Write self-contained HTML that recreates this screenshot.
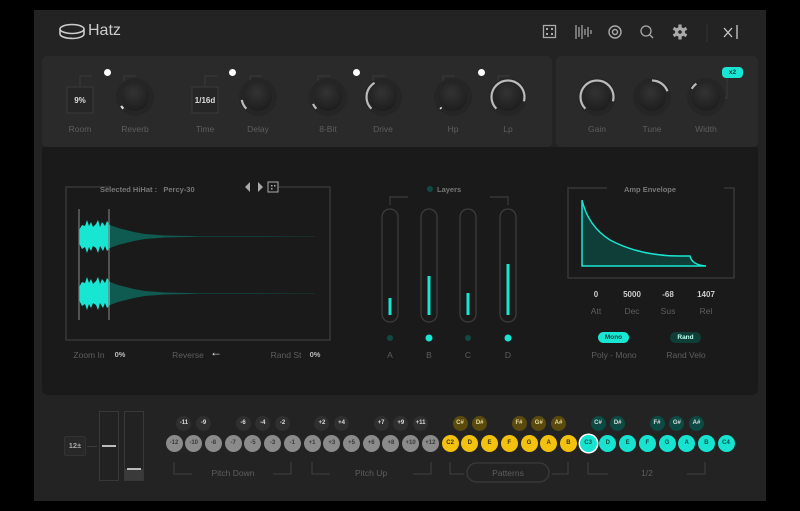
<!DOCTYPE html>
<html><head><meta charset="utf-8"><style>
*{margin:0;padding:0;box-sizing:border-box}
body{width:800px;height:511px;background:#000;position:relative;overflow:hidden;font-family:"Liberation Sans",sans-serif;font-weight:bold}
.a{position:absolute}
.lbl{position:absolute;font-size:8.5px;color:#5e5e5e;text-align:center;width:60px;margin-left:-30px;font-weight:normal}
.val{position:absolute;font-size:8px;color:#ccc;text-align:center;width:50px;margin-left:-25px}
.k{position:absolute;width:17px;height:17px;border-radius:50%;font-size:6px;line-height:17px;text-align:center;top:434.5px}
.u{position:absolute;width:15px;height:15px;border-radius:50%;font-size:6px;line-height:15px;text-align:center;top:415.5px}
.g{background:#8b8b8b;color:#3a3a3a}.gu{background:#2f2f2f;color:#ddd}
.y{background:#f3c20f;color:#3a3000}.yu{background:#5a4a0e;color:#e8dca0}
.c{background:#16e3d0;color:#0d4c46}.cu{background:#0d4a44;color:#ddd}
.dot{position:absolute;width:7px;height:7px;border-radius:50%;background:#fff}
</style></head><body>
<div class="a" style="left:34px;top:10px;width:732px;height:491px;background:#232323"></div>
<!-- header -->
<svg class="a" style="left:58px;top:23px" width="30" height="18"><ellipse cx="14" cy="6" rx="12" ry="4.5" fill="none" stroke="#ccc" stroke-width="1.6"/><path d="M2 6v5c0 2.5 5.4 4.5 12 4.5s12-2 12-4.5V6" fill="none" stroke="#ccc" stroke-width="1.6"/><path d="M2 10.5c0 2.5 5.4 4.5 12 4.5" fill="none" stroke="#ccc" stroke-width="1"/></svg>
<div class="a" style="left:88px;top:22px;font-size:16px;color:#ccc;font-weight:normal">Hatz</div>
<svg class="a" style="left:542px;top:24px" width="200" height="18">
<rect x="1.5" y="1.5" width="12" height="12" fill="none" stroke="#aaa" stroke-width="1.3"/><rect x="4" y="4" width="2" height="2" fill="#aaa"/><rect x="9" y="4" width="2" height="2" fill="#aaa"/><rect x="4" y="9" width="2" height="2" fill="#aaa"/><rect x="9" y="9" width="2" height="2" fill="#aaa"/>
<g stroke="#aaa" stroke-width="1.2"><path d="M34 1v14M37 3v10M40 1v14M43 5v6M46 3v10M49 6v4"/></g>
<circle cx="73" cy="8" r="6" fill="none" stroke="#aaa" stroke-width="1.4"/><circle cx="73" cy="8" r="2.5" fill="none" stroke="#aaa" stroke-width="1.4"/>
<circle cx="104" cy="7" r="5" fill="none" stroke="#aaa" stroke-width="1.3"/><path d="M108 11l3 3" stroke="#aaa" stroke-width="1.3"/>
<g transform="translate(138 8)" fill="#aaa"><circle r="5"/><rect x="-1.6" y="-7.5" width="3.2" height="15"/><rect x="-1.6" y="-7.5" width="3.2" height="15" transform="rotate(60)"/><rect x="-1.6" y="-7.5" width="3.2" height="15" transform="rotate(120)"/><circle r="1.8" fill="#232323"/></g>
<path d="M165 -2v24" stroke="#333" stroke-width="1"/>
<path d="M182 4l8 9M190 4l-8 9M195 1v14" stroke="#ccc" stroke-width="1.3"/>
</svg>
<!-- top panels -->
<div class="a" style="left:42px;top:56px;width:510px;height:91px;background:#2a2a2a;border-radius:5px"></div>
<div class="a" style="left:556px;top:56px;width:202px;height:91px;background:#2a2a2a;border-radius:5px"></div>
<div class="a" style="left:42px;top:147px;width:716px;height:248px;background:#1a1a1a;border-radius:0 0 6px 6px"></div>
<svg class="a" style="left:0;top:0" width="800" height="150">
<defs><radialGradient id="kg" cx="45%" cy="35%" r="70%"><stop offset="0" stop-color="#333"/><stop offset="1" stop-color="#1c1c1c"/></radialGradient></defs>
<g fill="none" stroke="#3a3a3a" stroke-width="1">
<path d="M80 87V76h12"/><path d="M205 87V76h12"/><path d="M124 82V76h12"/><path d="M250 82V76h12"/>
<path d="M318 82V76h12"/><path d="M373 82V76h12"/><path d="M443 82V76h12"/><path d="M498 82V76h12"/>
<path d="M722 98h5V78"/>
</g>
<rect x="67" y="87" width="26" height="26" fill="#262626" stroke="#3a3a3a"/>
<rect x="192" y="87" width="26" height="26" fill="#262626" stroke="#3a3a3a"/>
<g>
<g transform="translate(135 97)"><circle r="19" fill="#252525"/><circle r="14" fill="url(#kg)"/><circle r="16.5" fill="none" stroke="#ddd" stroke-width="2.2" stroke-dasharray="3.5 200" transform="rotate(-225)"/></g>
<g transform="translate(258 97)"><circle r="19" fill="#252525"/><circle r="14" fill="url(#kg)"/><circle r="16.5" fill="none" stroke="#bbb" stroke-width="2.2" stroke-dasharray="10 200" transform="rotate(-225)"/></g>
<g transform="translate(328 97)"><circle r="19" fill="#252525"/><circle r="14" fill="url(#kg)"/><circle r="16.5" fill="none" stroke="#bbb" stroke-width="2.2" stroke-dasharray="5.8 200" transform="rotate(-225)"/></g>
<g transform="translate(383 97)"><circle r="19" fill="#252525"/><circle r="14" fill="url(#kg)"/><circle r="16.5" fill="none" stroke="#bbb" stroke-width="2.2" stroke-dasharray="30 200" transform="rotate(-225)"/></g>
<g transform="translate(453 97)"><circle r="19" fill="#252525"/><circle r="14" fill="url(#kg)"/><circle r="16.5" fill="none" stroke="#eee" stroke-width="2.2" stroke-dasharray="1.5 200" transform="rotate(-225)"/></g>
<g transform="translate(508 97)"><circle r="19" fill="#252525"/><circle r="14" fill="url(#kg)"/><circle r="16.5" fill="none" stroke="#bbb" stroke-width="2.2" stroke-dasharray="69 200" transform="rotate(-225)"/></g>
<g transform="translate(597 97)"><circle r="19" fill="#252525"/><circle r="14" fill="url(#kg)"/><circle r="16.5" fill="none" stroke="#bbb" stroke-width="2.2" stroke-dasharray="69 200" transform="rotate(-225)"/></g>
<g transform="translate(652 97)"><circle r="19" fill="#252525"/><circle r="14" fill="url(#kg)"/><circle r="16.5" fill="none" stroke="#bbb" stroke-width="2.2" stroke-dasharray="20 200" transform="rotate(-90)"/></g>
<g transform="translate(706 97)"><circle r="19" fill="#252525"/><circle r="14" fill="url(#kg)"/><circle r="16.5" fill="none" stroke="#bbb" stroke-width="2.2" stroke-dasharray="7 200" transform="rotate(-150)"/></g>
</g>
</svg>
<div class="val" style="left:80px;top:96px;color:#ddd">9%</div>
<div class="val" style="left:205px;top:96px;color:#ddd">1/16d</div>
<div class="dot" style="left:104px;top:69px"></div><div class="dot" style="left:229px;top:69px"></div><div class="dot" style="left:353px;top:69px"></div><div class="dot" style="left:478px;top:69px"></div>
<div class="a" style="left:722px;top:67px;width:21px;height:11px;border-radius:4px;background:#19e6d2;color:#0d3a36;font-size:6.5px;text-align:center;line-height:11px">x2</div>
<div class="lbl" style="left:80px;top:124px">Room</div><div class="lbl" style="left:135px;top:124px">Reverb</div>
<div class="lbl" style="left:205px;top:124px">Time</div><div class="lbl" style="left:258px;top:124px">Delay</div>
<div class="lbl" style="left:328px;top:124px">8-Bit</div><div class="lbl" style="left:383px;top:124px">Drive</div>
<div class="lbl" style="left:453px;top:124px">Hp</div><div class="lbl" style="left:508px;top:124px">Lp</div>
<div class="lbl" style="left:597px;top:124px">Gain</div><div class="lbl" style="left:652px;top:124px">Tune</div><div class="lbl" style="left:706px;top:124px">Width</div>
<!-- middle -->
<svg class="a" style="left:0;top:150px" width="800" height="250">
<g transform="translate(0 -150)">
<path d="M110 187H66v153h264V187h-52" fill="none" stroke="#3c3c3c" stroke-width="1.3"/>
<path d="M250 182l-5 5 5 5z M258 182l5 5-5 5z" fill="#aaa"/>
<rect x="268" y="182" width="10" height="10" fill="none" stroke="#aaa" stroke-width="1"/><rect x="271" y="185" width="1.5" height="1.5" fill="#aaa"/><rect x="274" y="185" width="1.5" height="1.5" fill="#aaa"/><rect x="271" y="188" width="1.5" height="1.5" fill="#aaa"/>
<g id="w"><path d="M110 225L118 228L126 230L134 232L145 234L165 235.5L200 236.2L315 236.4L315 236.6L200 236.8L165 237.5L145 239L134 241L126 243L118 245L110 248Z" fill="#0f5a51"/>
<path d="M79 230L82 225L85 226L87 220L89 226L91 222L93 227L96 224L98 220L100 227L102 222L105 226L107 221L110 225L110 248L107 251L105 246L103 251L100 246L98 253L96 248L93 246L91 251L89 247L87 253L85 247L82 249L79 243Z" fill="#19e6d2"/></g>
<use href="#w" transform="translate(0 57)"/>
<path d="M79 209v111M109 209v111" stroke="#777" stroke-width="1.2"/>
<path d="M390 205v-8h18M508 205v-8h-18" fill="none" stroke="#3c3c3c" stroke-width="1.2"/>
<circle cx="430" cy="189" r="3" fill="#0f4a44"/>
<g fill="none" stroke="#3c3c3c" stroke-width="1.3"><rect x="382" y="209" width="16" height="113" rx="8"/><rect x="421" y="209" width="16" height="113" rx="8"/><rect x="460" y="209" width="16" height="113" rx="8"/><rect x="500" y="209" width="16" height="113" rx="8"/></g>
<g fill="#19e6d2"><rect x="388.5" y="298" width="3" height="17"/><rect x="427.5" y="276" width="3" height="39"/><rect x="466.5" y="293" width="3" height="22"/><rect x="506.5" y="264" width="3" height="51"/></g>
<circle cx="390" cy="338" r="3" fill="#0f4a44"/><circle cx="429" cy="338" r="3.5" fill="#19e6d2"/><circle cx="468" cy="338" r="3" fill="#0f4a44"/><circle cx="508" cy="338" r="3.5" fill="#19e6d2"/>
<path d="M607 188h-39v90h166v-90h-10" fill="none" stroke="#3c3c3c" stroke-width="1.3"/>
<path d="M582 200V266H706Q692 265 690 256H680Q640 256 610 240Q588 226 582 200Z" fill="#0f3d38"/>
<path d="M582 200V266H706Q692 265 690 256H680Q640 256 610 240Q588 226 582 200" fill="none" stroke="#19e6d2" stroke-width="1.5"/>
</g></svg>
<div class="a" style="left:100px;top:185px;width:160px;font-size:7.5px;color:#777">Selected HiHat :&nbsp;&nbsp; Percy-30</div>
<div class="a" style="left:437px;top:185px;font-size:7.5px;color:#777">Layers</div>
<div class="a" style="left:610px;top:185px;width:80px;text-align:center;font-size:7.5px;color:#777">Amp Envelope</div>
<div class="lbl" style="left:89px;top:350px">Zoom In</div><div class="val" style="left:120px;top:350px;color:#bbb;font-size:7.5px">0%</div>
<div class="lbl" style="left:188px;top:350px">Reverse</div><div class="a" style="left:210px;top:345px;color:#eee;font-size:12px">←</div>
<div class="lbl" style="left:286px;top:350px">Rand St</div><div class="val" style="left:315px;top:350px;color:#bbb;font-size:7.5px">0%</div>
<div class="lbl" style="left:390px;top:350px">A</div><div class="lbl" style="left:429px;top:350px">B</div><div class="lbl" style="left:468px;top:350px">C</div><div class="lbl" style="left:508px;top:350px">D</div>
<div class="val" style="left:596px;top:290px">0</div><div class="val" style="left:632px;top:290px">5000</div><div class="val" style="left:668px;top:290px">-68</div><div class="val" style="left:706px;top:290px">1407</div>
<div class="lbl" style="left:596px;top:306px">Att</div><div class="lbl" style="left:632px;top:306px">Dec</div><div class="lbl" style="left:668px;top:306px">Sus</div><div class="lbl" style="left:706px;top:306px">Rel</div>
<div class="a" style="left:598px;top:332px;width:31px;height:11px;border-radius:6px;background:#19e6d2;color:#0d3a36;font-size:6.5px;text-align:center;line-height:11px">Mono</div>
<div class="a" style="left:670px;top:332px;width:31px;height:11px;border-radius:6px;background:#0f3d38;color:#bfe;font-size:6.5px;text-align:center;line-height:11px">Rand</div>
<div class="lbl" style="left:614px;top:350px">Poly - Mono</div><div class="lbl" style="left:686px;top:350px">Rand Velo</div>
<!-- bottom -->
<div class="a" style="left:64px;top:436px;width:22px;height:20px;background:#282828;border:1px solid #333;border-radius:2px;color:#aaa;font-size:7.5px;text-align:center;line-height:18px">12±</div>
<div class="a" style="left:87px;top:446px;width:10px;height:1px;background:#3a3a3a"></div>
<div class="a" style="left:99px;top:411px;width:20px;height:70px;border:1px solid #383838;background:#222"></div>
<div class="a" style="left:102px;top:445px;width:14px;height:2px;background:#bbb"></div>
<div class="a" style="left:124px;top:411px;width:20px;height:70px;border:1px solid #383838;background:#222"></div>
<div class="a" style="left:125px;top:469px;width:18px;height:11px;background:#3a3a3a"></div>
<div class="a" style="left:127px;top:468px;width:14px;height:2px;background:#bbb"></div>
<svg class="a" style="left:0;top:455px" width="800" height="30"><g fill="none" stroke="#3a3a3a" stroke-width="1.3" transform="translate(0 -455)">
<path d="M174 462v12h18M273 474h18v-12"/><path d="M312 462v12h18M413 474h18v-12"/><path d="M450 462v12h14M552 474h16v-12"/><path d="M588 462v12h20M687 474h18v-12"/>
<rect x="467" y="463" width="82" height="19" rx="9.5"/></g></svg>
<div class="lbl" style="left:233px;top:468px;width:80px;margin-left:-40px">Pitch Down</div>
<div class="lbl" style="left:371px;top:468px;width:80px;margin-left:-40px">Pitch Up</div>
<div class="lbl" style="left:508px;top:468px;width:80px;margin-left:-40px">Patterns</div>
<div class="lbl" style="left:647px;top:468px">1/2</div>
<div class="k g" style="left:165.5px">-12</div><div class="k g" style="left:185.2px">-10</div><div class="k g" style="left:204.9px">-8</div><div class="k g" style="left:224.7px">-7</div><div class="k g" style="left:244.4px">-5</div><div class="k g" style="left:264.1px">-3</div><div class="k g" style="left:283.8px">-1</div><div class="k g" style="left:303.5px">+1</div><div class="k g" style="left:323.3px">+3</div><div class="k g" style="left:343px">+5</div><div class="k g" style="left:362.7px">+6</div><div class="k g" style="left:382.4px">+8</div><div class="k g" style="left:402.1px">+10</div><div class="k g" style="left:421.9px">+12</div>
<div class="k y" style="left:441.6px">C2</div><div class="k y" style="left:461.3px">D</div><div class="k y" style="left:481px">E</div><div class="k y" style="left:500.7px">F</div><div class="k y" style="left:520.5px">G</div><div class="k y" style="left:540.2px">A</div><div class="k y" style="left:559.9px">B</div>
<div class="k c" style="left:579.6px;box-shadow:0 0 0 1.5px #fff">C3</div><div class="k c" style="left:599.3px">D</div><div class="k c" style="left:619.1px">E</div><div class="k c" style="left:638.8px">F</div><div class="k c" style="left:658.5px">G</div><div class="k c" style="left:678.2px">A</div><div class="k c" style="left:697.9px">B</div><div class="k c" style="left:717.5px">C4</div>
<div class="u gu" style="left:176.4px">-11</div><div class="u gu" style="left:196.1px">-9</div><div class="u gu" style="left:235.5px">-6</div><div class="u gu" style="left:255.3px">-4</div><div class="u gu" style="left:275px">-2</div><div class="u gu" style="left:314.4px">+2</div><div class="u gu" style="left:334.1px">+4</div><div class="u gu" style="left:373.5px">+7</div><div class="u gu" style="left:393.3px">+9</div><div class="u gu" style="left:413px">+11</div>
<div class="u yu" style="left:452.5px">C#</div><div class="u yu" style="left:472.2px">D#</div><div class="u yu" style="left:511.5px">F#</div><div class="u yu" style="left:531.3px">G#</div><div class="u yu" style="left:551px">A#</div>
<div class="u cu" style="left:590.5px">C#</div><div class="u cu" style="left:610.2px">D#</div><div class="u cu" style="left:649.5px">F#</div><div class="u cu" style="left:669.4px">G#</div><div class="u cu" style="left:689px">A#</div>
</body></html>
